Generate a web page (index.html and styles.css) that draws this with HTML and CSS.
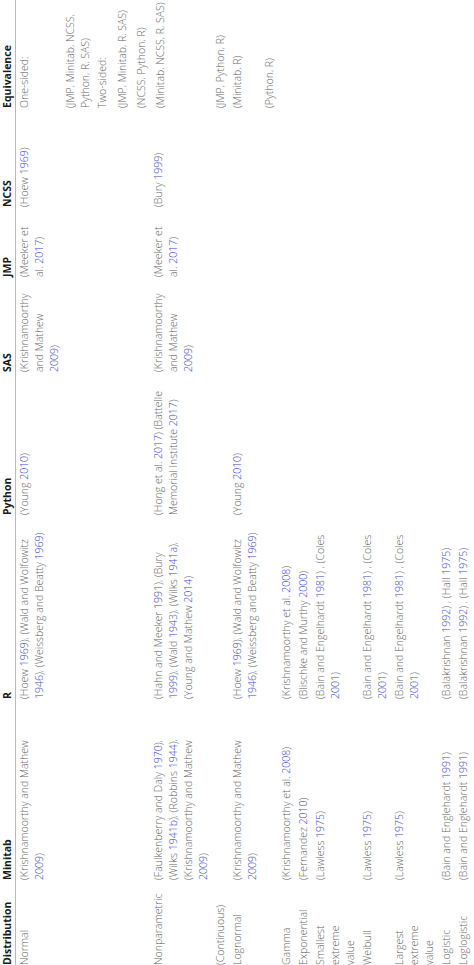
FILE: index.html
```html
<!DOCTYPE html>
<html lang="en">
<head>
<meta charset="utf-8">
<title>Tolerance interval software by distribution</title>
<link rel="stylesheet" href="styles.css">
</head>
<body>
<div class="sheet">
  <div class="row head">
    <div class="cell">Distribution</div>
    <div class="cell">Minitab</div>
    <div class="cell">R</div>
    <div class="cell">Python</div>
    <div class="cell">SAS</div>
    <div class="cell">JMP</div>
    <div class="cell">NCSS</div>
    <div class="cell">Equivalence</div>
  </div>

  <div class="row">
    <div class="cell">Normal</div>
    <div class="cell">(Krishnamoorthy and Mathew<br><a>2009</a>)</div>
    <div class="cell">(Hoew <a>1969</a>), (Wald and Wolfowitz<br><a>1946</a>), (Weissberg and Beatty <a>1969</a>)</div>
    <div class="cell">(Young <a>2010</a>)</div>
    <div class="cell">(Krishnamoorthy<br>and Mathew<br><a>2009</a>)</div>
    <div class="cell">(Meeker et<br>al. <a>2017</a>)</div>
    <div class="cell">(Hoew <a>1969</a>)</div>
    <div class="cell">
      <p class="ln">One-sided:</p>
      <p class="ln gap-xl">(JMP, Minitab, NCSS,<br>Python, R, SAS)</p>
      <p class="ln gap-xs">Two-sided:</p>
      <p class="ln gap-m">(JMP, Minitab, R, SAS)</p>
      <p class="ln gap-s">(NCSS, Python, R)</p>
    </div>
  </div>

  <div class="row">
    <div class="cell">Nonparametric</div>
    <div class="cell">(Faulkenberry and Daly <a>1970</a>),<br>(Wilks <a>1941b</a>), (Robbins <a>1944</a>),<br>(Krishnamoorthy and Mathew<br><a>2009</a>)</div>
    <div class="cell">(Hahn and Meeker <a>1991</a>), (Bury<br><a>1999</a>), (Wald <a>1943</a>), (Wilks <a>1941a</a>),<br>(Young and Mathew <a>2014</a>)</div>
    <div class="cell">(Hong et al. <a>2017</a>) (Battelle<br>Memorial Institute <a>2017</a>)</div>
    <div class="cell">(Krishnamoorthy<br>and Mathew<br><a>2009</a>)</div>
    <div class="cell">(Meeker et<br>al. <a>2017</a>)</div>
    <div class="cell">(Bury <a>1999</a>)</div>
    <div class="cell"><p class="ln gap-xs">(Minitab, NCSS, R, SAS)</p></div>
  </div>

  <div class="row">
    <div class="cell">(Continuous)</div>
    <div class="cell"></div>
    <div class="cell"></div>
    <div class="cell"></div>
    <div class="cell"></div>
    <div class="cell"></div>
    <div class="cell"></div>
    <div class="cell">(JMP, Python, R)</div>
  </div>

  <div class="row">
    <div class="cell">Lognormal</div>
    <div class="cell">(Krishnamoorthy and Mathew<br><a>2009</a>)</div>
    <div class="cell">(Hoew <a>1969</a>), (Wald and Wolfowitz<br><a>1946</a>), (Weissberg and Beatty <a>1969</a>)</div>
    <div class="cell">(Young <a>2010</a>)</div>
    <div class="cell"></div>
    <div class="cell"></div>
    <div class="cell"></div>
    <div class="cell">
      <p class="ln">(Minitab, R)</p>
      <p class="ln gap-l">(Python, R)</p>
    </div>
  </div>

  <div class="row">
    <div class="cell">Gamma</div>
    <div class="cell">(Krishnamoorthy et al. <a>2008</a>)</div>
    <div class="cell">(Krishnamoorthy et al. <a>2008</a>)</div>
    <div class="cell"></div><div class="cell"></div><div class="cell"></div><div class="cell"></div><div class="cell"></div>
  </div>

  <div class="row">
    <div class="cell">Exponential</div>
    <div class="cell">(Fernandez <a>2010</a>)</div>
    <div class="cell">(Blischke and Murthy <a>2000</a>)</div>
    <div class="cell"></div><div class="cell"></div><div class="cell"></div><div class="cell"></div><div class="cell"></div>
  </div>

  <div class="row">
    <div class="cell">Smallest<br>extreme<br>value</div>
    <div class="cell">(Lawless <a>1975</a>)</div>
    <div class="cell">(Bain and Engelhardt <a>1981</a>) , (Coles<br><a>2001</a>)</div>
    <div class="cell"></div><div class="cell"></div><div class="cell"></div><div class="cell"></div><div class="cell"></div>
  </div>

  <div class="row">
    <div class="cell">Weibull</div>
    <div class="cell">(Lawless <a>1975</a>)</div>
    <div class="cell">(Bain and Engelhardt <a>1981</a>) , (Coles<br><a>2001</a>)</div>
    <div class="cell"></div><div class="cell"></div><div class="cell"></div><div class="cell"></div><div class="cell"></div>
  </div>

  <div class="row">
    <div class="cell">Largest<br>extreme<br>value</div>
    <div class="cell">(Lawless <a>1975</a>)</div>
    <div class="cell">(Bain and Engelhardt <a>1981</a>) , (Coles<br><a>2001</a>)</div>
    <div class="cell"></div><div class="cell"></div><div class="cell"></div><div class="cell"></div><div class="cell"></div>
  </div>

  <div class="row">
    <div class="cell">Logistic</div>
    <div class="cell">(Bain and Englehardt <a>1991</a>)</div>
    <div class="cell">(Balakrishnan <a>1992</a>) , (Hall <a>1975</a>)</div>
    <div class="cell"></div><div class="cell"></div><div class="cell"></div><div class="cell"></div><div class="cell"></div>
  </div>

  <div class="row">
    <div class="cell">Loglogistic</div>
    <div class="cell">(Bain and Englehardt <a>1991</a>)</div>
    <div class="cell">(Balakrishnan <a>1992</a>) , (Hall <a>1975</a>)</div>
    <div class="cell"></div><div class="cell"></div><div class="cell"></div><div class="cell"></div><div class="cell"></div>
  </div>
</div>
</body>
</html>
```

FILE: styles.css
```css
html, body {
  margin: 0;
  padding: 0;
  overflow: hidden;
  background: #ffffff;
}

body {
  width: 474px;
  height: 965px;
  font-family: "Open Sans", "Noto Sans", "DejaVu Sans", sans-serif;
}

/* The whole table is printed sideways: rotated a quarter turn
   counter-clockwise so its rows run left to right across the page. */
.sheet {
  width: 1040px;
  height: 474px;
  padding-left: 2px;
  box-sizing: border-box;
  transform-origin: 0 0;
  transform: translateY(967px) rotate(-90deg);
  font-size: 10.5px;
  line-height: 15px;
  color: #666666;
  font-weight: 300;
}

.row {
  display: grid;
  grid-template-columns: 85px 181px 184px 143px 95px 70px 99px 160px;
  padding: 1px 0;
}

.row.head {
  padding: 0;
  margin-left: -2px;
  padding-left: 2px;
  border-bottom: 1.5px solid #b9b9b9;
  color: #1a1a1a;
  font-weight: 700;
  height: 15px;
}

.cell {
  white-space: nowrap;
}

.cell a {
  color: #4646d2;
  text-decoration: none;
}

.ln {
  margin: 0;
}

.gap-xs { margin-top: 2px; }
.gap-s { margin-top: 4px; }
.gap-m { margin-top: 5px; }
.gap-l { margin-top: 17px; }
.gap-xl { margin-top: 31px; }
```
